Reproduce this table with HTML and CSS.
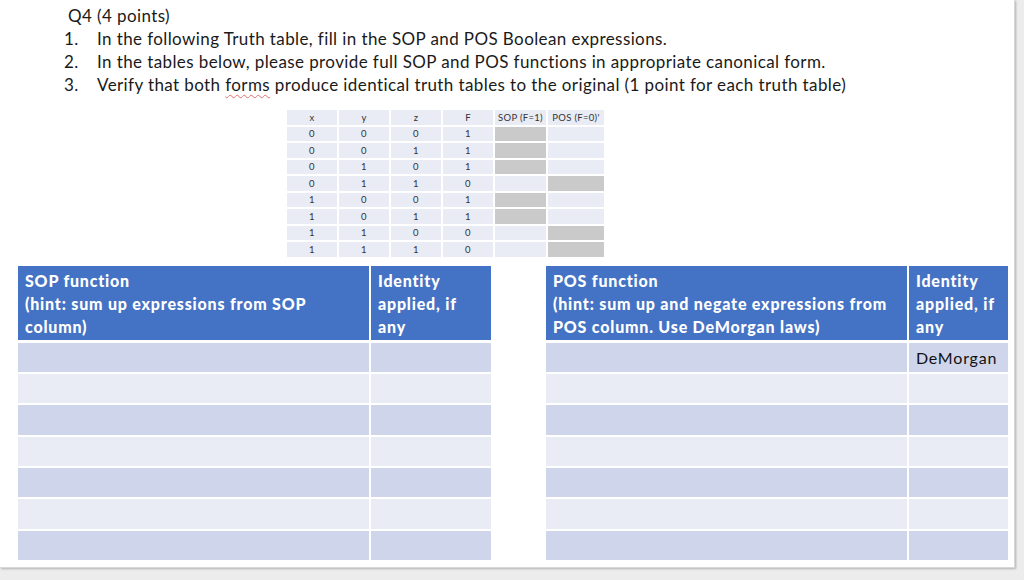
FILE: index.html
```html
<!DOCTYPE html>
<html>
<head>
<meta charset="utf-8">
<link rel="stylesheet" href="styles.css">
</head>
<body>
<div class="page">
  <div class="intro">
    <div class="title">Q4 (4 points)</div>
    <ol class="steps">
      <li><span class="num">1.</span><span>In the following Truth table, fill in the SOP and POS Boolean expressions.</span></li>
      <li><span class="num">2.</span><span>In the tables below, please provide full SOP and POS functions in appropriate canonical form.</span></li>
      <li><span class="num">3.</span><span>Verify that both <span class="squiggle">forms</span> produce identical truth tables to the original (1 point for each truth table)</span></li>
    </ol>
  </div>

  <div class="truth">
    <div>x</div><div>y</div><div>z</div><div>F</div><div>SOP (F=1)</div><div>POS (F=0)'</div>
    <div>0</div><div>0</div><div>0</div><div>1</div><div class="g"></div><div></div>
    <div>0</div><div>0</div><div>1</div><div>1</div><div class="g"></div><div></div>
    <div>0</div><div>1</div><div>0</div><div>1</div><div class="g"></div><div></div>
    <div>0</div><div>1</div><div>1</div><div>0</div><div></div><div class="g"></div>
    <div>1</div><div>0</div><div>0</div><div>1</div><div class="g"></div><div></div>
    <div>1</div><div>0</div><div>1</div><div>1</div><div class="g"></div><div></div>
    <div>1</div><div>1</div><div>0</div><div>0</div><div></div><div class="g"></div>
    <div>1</div><div>1</div><div>1</div><div>0</div><div></div><div class="g"></div>
  </div>

  <div class="tables">
    <div class="ftable sop">
      <div class="hd">SOP function<br>(hint: sum up expressions from SOP<br>column)</div>
      <div class="hd">Identity<br>applied, if<br>any</div>
      <div class="d"></div><div class="d"></div>
      <div class="l"></div><div class="l"></div>
      <div class="d"></div><div class="d"></div>
      <div class="l"></div><div class="l"></div>
      <div class="d"></div><div class="d"></div>
      <div class="l"></div><div class="l"></div>
      <div class="d"></div><div class="d"></div>
    </div>
    <div class="ftable pos">
      <div class="hd">POS function<br>(hint: sum up and negate expressions from<br>POS column. Use DeMorgan laws)</div>
      <div class="hd">Identity<br>applied, if<br>any</div>
      <div class="d"></div><div class="d txt">DeMorgan</div>
      <div class="l"></div><div class="l"></div>
      <div class="d"></div><div class="d"></div>
      <div class="l"></div><div class="l"></div>
      <div class="d"></div><div class="d"></div>
      <div class="l"></div><div class="l"></div>
      <div class="d"></div><div class="d"></div>
    </div>
  </div>
</div>
</body>
</html>
```

FILE: styles.css
```css
html, body {
  margin: 0;
  padding: 0;
}
body {
  background: #ececec;
  width: 1024px;
  height: 580px;
  overflow: hidden;
  font-family: "Lato", "Open Sans", sans-serif;
}
.page {
  width: 1015px;
  height: 568px;
  background: #ffffff;
  box-shadow: 1px 1px 2px rgba(0,0,0,0.25);
  border-right: 1px solid #d8d8d8;
  border-bottom: 1px solid #d8d8d8;
  box-sizing: border-box;
}
.intro {
  padding: 4px 0 0 64px;
  color: #1a1a1a;
  font-size: 17px;
  line-height: 23px;
  letter-spacing: 0.4px;
}
.title {
  padding-left: 4px;
}
.steps {
  list-style: none;
  margin: 0;
  padding: 0;
}
.steps li {
  display: flex;
}
.steps .num {
  width: 33px;
  flex: none;
}
.squiggle {
  text-decoration: underline wavy #e07070;
  text-decoration-thickness: 1px;
  text-underline-offset: 3px;
}
.truth {
  margin: 14px 0 0 287px;
  display: grid;
  grid-template-columns: 50px 50px 50px 50px 51px 56px;
  grid-auto-rows: 14.5px;
  gap: 2px;
  width: max-content;
  font-size: 9.5px;
  letter-spacing: 0.3px;
  color: #333333;
}
.truth > div {
  background: #e9ebf5;
  display: flex;
  align-items: center;
  justify-content: center;
  white-space: nowrap;
}
.truth > div.g {
  background: #cacaca;
}
.tables {
  margin-top: 9px;
  display: flex;
  padding-left: 18px;
  gap: 55px;
}
.ftable {
  display: grid;
  grid-template-rows: 75px repeat(7, 29.4px);
  row-gap: 2px;
  column-gap: 2px;
}
.sop {
  grid-template-columns: 351px 120px;
}
.pos {
  grid-template-columns: 361px 99px;
}
.ftable .hd {
  background: #4472c4;
  color: #ffffff;
  font-weight: 900;
  font-size: 16px;
  line-height: 23px;
  letter-spacing: 0.8px;
  padding: 3px 0 0 7px;
  box-sizing: border-box;
  margin-bottom: 1px;
}
.ftable .d {
  background: #cfd5ea;
}
.ftable .l {
  background: #e9ebf5;
}
.ftable .txt {
  font-size: 16px;
  letter-spacing: 0.8px;
  color: #111;
  padding-left: 7px;
  display: flex;
  align-items: center;
}
```
